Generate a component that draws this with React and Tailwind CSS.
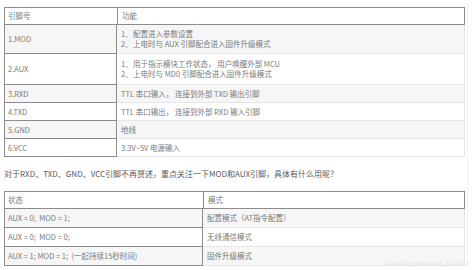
const pins = [
  { pin: "1.MOD", h: "h-[29px]", lines: ["配置进入参数设置", "上电时与 AUX 引脚配合进入固件升级模式"], bg: "bg-[#f6f6f6]" },
  { pin: "2.AUX", h: "h-[31px]", lines: ["用于指示模块工作状态， 用户唤醒外部 MCU", "上电时与 MD0 引脚配合进入固件升级模式"], bg: "bg-white" },
  { pin: "3.RXD", h: "h-[18px]", text: "TTL 串口输入， 连接到外部 TXD 输出引脚", bg: "bg-[#f6f6f6]" },
  { pin: "4.TXD", h: "h-[18px]", text: "TTL 串口输出， 连接到外部 RXD 输入引脚", bg: "bg-white" },
  { pin: "5.GND", h: "h-[18px]", text: "地线", bg: "bg-[#f6f6f6]" },
  { pin: "6.VCC", h: "h-[18px]", text: "3.3V~5V 电源输入", bg: "bg-white" },
];

const modes = [
  { state: "AUX = 0;  MOD = 1;", mode: "配置模式（AT指令配置）", bg: "bg-[#f6f6f6]" },
  { state: "AUX = 0;  MOD = 0;", mode: "无线通信模式", bg: "bg-white" },
  { state: "AUX = 1; MOD = 1;  (一起持续15秒时间)", mode: "固件升级模式", bg: "bg-[#f6f6f6]" },
];

function Table({ head, left, rows }) {
  return (
    <div className="flex flex-col w-[461px]">
      <div className="flex h-[18px] border border-[#8c8c8c]">
        <div className={`${left} shrink-0 border-r border-[#8c8c8c] px-[3px] flex items-center`}>{head[0]}</div>
        <div className="flex-1 px-[4px] flex items-center">{head[1]}</div>
      </div>
      {rows.map((r, i) => (
        <div key={i} className={`flex ${r.h} ${r.bg}`}>
          <div className={`${left} shrink-0 border-x border-b border-[#8c8c8c] px-[3px] flex items-center whitespace-pre`}>{r.a}</div>
          <div className="flex-1 border-b border-r border-[#e6e6e6] px-[4px] flex flex-col justify-center whitespace-pre">{r.b}</div>
        </div>
      ))}
    </div>
  );
}

export default function App() {
  const pinRows = pins.map((p) => ({
    h: p.h,
    bg: p.bg,
    a: p.pin,
    b: p.lines ? (
      p.lines.map((l, j) => (
        <div key={j} className="flex leading-[10px]">
          <span className="w-[12px]">{j + 1}、</span>
          <span>{l}</span>
        </div>
      ))
    ) : (
      <span>{p.text}</span>
    ),
  }));
  const modeRows = modes.map((m) => ({ h: "h-[19px]", bg: m.bg, a: m.state, b: <span>{m.mode}</span> }));

  return (
    <div
      className="relative w-[474px] h-[270px] bg-white overflow-hidden text-[7.5px] text-[#7a7a7a] pl-[4px] pt-[7px]"
      style={{ fontFamily: '"Noto Sans CJK SC", "Noto Sans", sans-serif' }}
    >
      <Table head={["引脚号", "功能"]} left="w-[113px]" rows={pinRows} />
      <p className="h-[34px] flex items-center text-[8px] text-[#5a5a5a]">
        对于RXD、TXD、GND、VCC引脚不再赘述，重点关注一下MOD和AUX引脚，具体有什么用呢？
      </p>
      <Table head={["状态", "模式"]} left="w-[199px]" rows={modeRows} />
      <div className="absolute right-[6px] top-[2px] bottom-[2px] w-px bg-[#f2f2f2]" />
      <div className="absolute right-[6px] bottom-[4px] text-[5px] text-[#e4e4e4]">https://blog.csdn.net/qq_41922853</div>
    </div>
  );
}
